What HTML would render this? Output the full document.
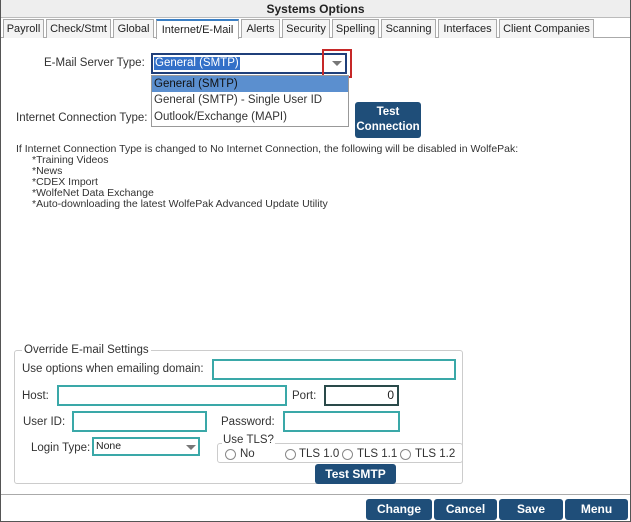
<!DOCTYPE html>
<html><head><style>
*{box-sizing:border-box;margin:0;padding:0}
body{width:631px;height:522px;overflow:hidden;background:#fff;font-family:"Liberation Sans",sans-serif;color:#222;position:relative}
.a{position:absolute;white-space:nowrap}
#frame{position:absolute;left:0;top:0;width:631px;height:522px;border:1px solid #555;border-top:none}
.tab{position:absolute;top:19px;height:19px;border:1px solid #aaa;border-bottom:none;background:#f4f4f4;font-size:11px;text-align:center;line-height:18px;white-space:nowrap;overflow:hidden}
.in{position:absolute;border:2px solid #3aa8a8;background:#fff}
.btn{position:absolute;background:#1f4e79;color:#fff;font-weight:bold;font-size:12px;text-align:center;border-radius:3px}
.lbl{position:absolute;font-size:11.5px;white-space:nowrap;color:#333}
.rad{position:absolute;width:11px;height:11px;border:1px solid #888;border-radius:50%;background:#fff}
.s{font-size:10.5px;line-height:11px;color:#333}
</style></head><body>
<div class="a" style="left:0;top:0;width:631px;height:18px;background:#eee;border-bottom:1px solid #bbb;text-align:center;font-weight:bold;font-size:12px;line-height:18px">Systems Options</div>
<div class="a" style="left:0;top:37px;width:631px;height:1px;background:#aaa"></div>
<div class="tab" style="left:3px;width:41px">Payroll</div>
<div class="tab" style="left:46px;width:65px">Check/Stmt</div>
<div class="tab" style="left:113px;width:41px">Global</div>
<div class="tab" style="left:156px;width:83px;background:#fff;border-top:2px solid #3b7fc4;height:20px">Internet/E-Mail</div>
<div class="tab" style="left:241px;width:39px">Alerts</div>
<div class="tab" style="left:282px;width:48px">Security</div>
<div class="tab" style="left:332px;width:47px">Spelling</div>
<div class="tab" style="left:381px;width:55px">Scanning</div>
<div class="tab" style="left:438px;width:59px">Interfaces</div>
<div class="tab" style="left:499px;width:95px">Client Companies</div>

<div class="lbl" style="left:44px;top:57px">E-Mail Server Type:</div>
<div class="a" style="left:151px;top:53px;width:196px;height:21px;border:2px solid #1f3f7a;background:#fff"></div>
<div class="a" style="left:154px;top:57px;background:#3370c8;color:#fff;font-size:11.5px;padding:0 1px;line-height:13px">General (SMTP)</div>
<div class="a" style="left:322px;top:49px;width:30px;height:29px;border:2px solid #c62828"></div>
<div class="a" style="left:332px;top:61px;width:0;height:0;border-left:5px solid transparent;border-right:5px solid transparent;border-top:5px solid #777"></div>
<div class="a" style="left:151px;top:75px;width:198px;height:52px;border:1px solid #999;background:#fff"></div>
<div class="a" style="left:152px;top:76px;width:196px;height:16px;background:#5b8fcf;font-size:11.5px;line-height:16px;padding-left:2px;color:#111">General (SMTP)</div>
<div class="lbl" style="left:154px;top:94px">General (SMTP) - Single User ID</div>
<div class="lbl" style="left:154px;top:111px">Outlook/Exchange (MAPI)</div>
<div class="lbl" style="left:16px;top:112px">Internet Connection Type:</div>
<div class="btn" style="left:355px;top:102px;width:66px;height:36px;line-height:15px;padding-top:3px;font-size:11.5px">Test<br>Connection</div>

<div class="a s" style="left:16px;top:144px">If Internet Connection Type is changed to No Internet Connection, the following will be disabled in WolfePak:</div>
<div class="a s" style="left:32px;top:155px">*Training Videos<br>*News<br>*CDEX Import<br>*WolfeNet Data Exchange<br>*Auto-downloading the latest WolfePak Advanced Update Utility</div>

<div class="a" style="left:14px;top:350px;width:449px;height:134px;border:1px solid #ccc;border-radius:3px"></div>
<div class="lbl" style="left:22px;top:344px;background:#fff;padding:0 2px">Override E-mail Settings</div>
<div class="lbl" style="left:22px;top:363px">Use options when emailing domain:</div>
<div class="in" style="left:212px;top:359px;width:244px;height:21px"></div>
<div class="lbl" style="left:22px;top:390px">Host:</div>
<div class="in" style="left:57px;top:385px;width:230px;height:21px"></div>
<div class="lbl" style="left:292px;top:390px">Port:</div>
<div class="in" style="left:324px;top:385px;width:75px;height:21px;border-color:#2a4a4a;font-size:12px;text-align:right;padding-right:3px;line-height:17px">0</div>
<div class="lbl" style="left:23px;top:416px">User ID:</div>
<div class="in" style="left:72px;top:411px;width:135px;height:21px"></div>
<div class="lbl" style="left:221px;top:416px">Password:</div>
<div class="in" style="left:283px;top:411px;width:117px;height:21px"></div>
<div class="lbl" style="left:31px;top:442px">Login Type:</div>
<div class="in" style="left:92px;top:437px;width:108px;height:19px;font-size:10.5px;line-height:15px;padding-left:2px">None</div>
<div class="a" style="left:186px;top:445px;border-left:5px solid transparent;border-right:5px solid transparent;border-top:5px solid #777"></div>
<div class="a" style="left:217px;top:443px;width:246px;height:20px;border:1px solid #ccc;border-radius:3px"></div>
<div class="lbl" style="left:222px;top:434px;background:#fff;padding:0 1px">Use TLS?</div>
<div class="rad" style="left:225px;top:449px"></div><div class="lbl" style="left:240px;top:448px">No</div>
<div class="rad" style="left:285px;top:449px"></div><div class="lbl" style="left:299px;top:448px">TLS 1.0</div>
<div class="rad" style="left:342px;top:449px"></div><div class="lbl" style="left:357px;top:448px">TLS 1.1</div>
<div class="rad" style="left:400px;top:449px"></div><div class="lbl" style="left:415px;top:448px">TLS 1.2</div>
<div class="btn" style="left:315px;top:464px;width:81px;height:20px;line-height:20px">Test SMTP</div>

<div class="a" style="left:0;top:494px;width:631px;height:1px;background:#aaa"></div>
<div class="btn" style="left:366px;top:499px;width:66px;height:21px;line-height:21px">Change</div>
<div class="btn" style="left:434px;top:499px;width:63px;height:21px;line-height:21px">Cancel</div>
<div class="btn" style="left:499px;top:499px;width:64px;height:21px;line-height:21px">Save</div>
<div class="btn" style="left:565px;top:499px;width:63px;height:21px;line-height:21px">Menu</div>
<div id="frame"></div>
</body></html>
